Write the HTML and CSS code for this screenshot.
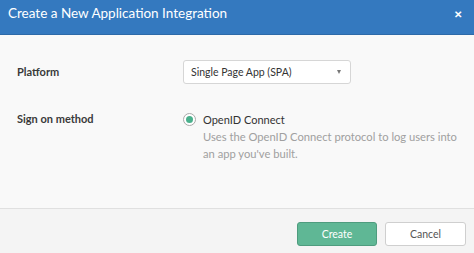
FILE: index.html
```html
<!DOCTYPE html>
<html lang="en">
<head>
    <meta charset="UTF-8">
    <title>Create a New Application Integration</title>
    <link rel="stylesheet" href="styles.css">
</head>
<body>
    <div class="modal">
        <div class="modal-header">
            <h1>Create a New Application Integration</h1>
            <span class="close">&#10005;</span>
        </div>

        <div class="modal-body">
            <div class="form-row">
                <label class="row-label">Platform</label>
                <div class="select">
                    <span>Single Page App (SPA)</span>
                    <span class="caret"></span>
                </div>
            </div>

            <div class="form-row form-row-top">
                <label class="row-label">Sign on method</label>
                <div class="option">
                    <div class="option-head">
                        <span class="radio"><span class="radio-dot"></span></span>
                        <span class="option-title">OpenID Connect</span>
                    </div>
                    <p class="option-desc">Uses the OpenID Connect protocol to log users into an app you've built.</p>
                </div>
            </div>
        </div>

        <div class="modal-footer">
            <button class="btn btn-primary">Create</button>
            <button class="btn">Cancel</button>
        </div>
    </div>
</body>
</html>
```

FILE: styles.css
```css
* {
    box-sizing: border-box;
    margin: 0;
    padding: 0;
    font-family: 'Lato', 'Open Sans', sans-serif;
}

body {
    width: 474px;
    height: 253px;
    background-color: #f9f9f9;
}

.modal {
    display: flex;
    flex-direction: column;
    height: 253px;
}

.modal-header {
    height: 35px;
    background-color: #3479bf;
    border-bottom: 1px solid #2d6aa8;
    display: flex;
    align-items: flex-start;
    justify-content: space-between;
    padding: 5px 12px 0 8px;
    color: white;
}

.modal-header h1 {
    font-size: 13.5px;
    line-height: 16px;
    font-weight: 400;
}

.close {
    font-size: 10px;
    line-height: 16px;
    font-weight: 700;
    margin-top: 1px;
}

.modal-body {
    flex: 1;
    padding: 25px 17px 0;
}

.form-row {
    display: flex;
    align-items: center;
    margin-bottom: 28px;
}

.form-row-top {
    align-items: flex-start;
}

.row-label {
    flex-shrink: 0;
    width: 166px;
    font-size: 11px;
    line-height: 14px;
    font-weight: 700;
    color: #3a3a3a;
}

.select {
    width: 168px;
    height: 24px;
    border: 1px solid #d6d6d6;
    border-radius: 3px;
    background-color: white;
    display: flex;
    align-items: center;
    justify-content: space-between;
    padding: 0 9px 0 7px;
    font-size: 10.5px;
    color: #333;
}

.caret {
    width: 0;
    height: 0;
    border-left: 2.5px solid transparent;
    border-right: 2.5px solid transparent;
    border-top: 4px solid #777;
}

.option {
    flex-shrink: 0;
}

.option-head {
    display: flex;
    align-items: center;
    height: 14px;
}

.radio {
    width: 13px;
    height: 13px;
    border: 1px solid #aaa;
    border-radius: 50%;
    background-color: white;
    display: flex;
    align-items: center;
    justify-content: center;
    margin-right: 7px;
}

.radio-dot {
    width: 7px;
    height: 7px;
    border-radius: 50%;
    background-color: #4ab08c;
}

.option-title {
    font-size: 11px;
    color: #333;
}

.option-desc {
    margin-left: 20px;
    margin-top: 2px;
    width: 262px;
    font-size: 11.2px;
    line-height: 17px;
    color: #a0a0a0;
}

.modal-footer {
    height: 45px;
    border-top: 1px solid #e0e0e0;
    background-color: #f4f4f4;
    display: flex;
    justify-content: flex-end;
    align-items: flex-start;
    gap: 8px;
    padding: 13px 8px 0 0;
}

.btn {
    width: 81px;
    height: 24px;
    border: 1px solid #cfcfcf;
    border-radius: 3px;
    background-color: white;
    color: #555;
    font-size: 10.5px;
    cursor: pointer;
}

.btn-primary {
    width: 80px;
    background-color: #5fb795;
    border-color: #4e9c7e;
    color: white;
}
```
